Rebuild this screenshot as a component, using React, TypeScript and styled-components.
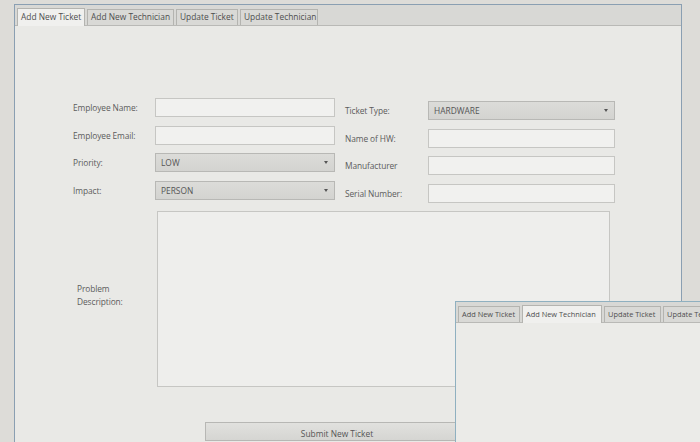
import React from "react";
import styled, { createGlobalStyle } from "styled-components";

const Global = createGlobalStyle`
  html, body { margin: 0; padding: 0; }
  body { background: #dcdcd8; font-family: "Open Sans", "Noto Sans", sans-serif; }
`;

const Page = styled.div`
  position: relative;
  width: 700px;
  height: 442px;
  overflow: hidden;
  background: #dddcd8;
`;

const Window = styled.div`
  position: absolute;
  left: 14px;
  top: 4px;
  width: 668px;
  height: 470px;
  border: 1.5px solid #8a9fb2;
  background: #e9e9e6;
  box-sizing: border-box;
  display: flex;
  flex-direction: column;
`;

const TabBar = styled.div<{ $h?: number }>`
  display: flex;
  align-items: flex-end;
  height: ${(p) => p.$h ?? 20}px;
  background: #d8d8d5;
  border-bottom: 1px solid #b9b9b6;
  padding-left: 2px;
  gap: 2px;
  flex-shrink: 0;
`;

const Tab = styled.div<{ $active?: boolean; $w: number; $fs?: number }>`
  width: ${(p) => p.$w}px;
  height: ${(p) => (p.$active ? 18 : 16)}px;
  box-sizing: border-box;
  border: 1px solid #b4b4b0;
  border-bottom: none;
  background: ${(p) => (p.$active ? "#f0f0ee" : "#d9d9d6")};
  color: #4e4e4e;
  font-size: ${(p) => p.$fs ?? 8.4}px;
  line-height: ${(p) => (p.$active ? 16 : 14)}px;
  padding-left: 3px;
  white-space: nowrap;
  overflow: hidden;
  flex-shrink: 0;
  margin-bottom: ${(p) => (p.$active ? -1 : 0)}px;
`;

const Body = styled.div`
  padding: 72px 0 0 58px;
  display: flex;
  flex-direction: column;
`;

const Columns = styled.div`
  display: flex;
`;

const FieldGrid = styled.div<{ $label: number; $field: number; $top: number; $left: number }>`
  display: grid;
  grid-template-columns: ${(p) => p.$label}px ${(p) => p.$field}px;
  grid-auto-rows: 19px;
  row-gap: 8.5px;
  margin-top: ${(p) => p.$top}px;
  margin-left: ${(p) => p.$left}px;
  align-items: center;
`;

const Label = styled.div`
  font-size: 8.4px;
  color: #5c5c5c;
  white-space: nowrap;
  letter-spacing: -0.1px;
`;

const Input = styled.div`
  height: 19px;
  box-sizing: border-box;
  border: 1px solid #c6c6c3;
  background: #f1f1ef;
`;

const Combo = styled.div`
  height: 19px;
  box-sizing: border-box;
  border: 1px solid #b8b8b5;
  background: linear-gradient(#dcdcd9, #d3d3d0);
  display: flex;
  align-items: center;
  justify-content: space-between;
  padding: 0 6px 0 5px;
  font-size: 8.4px;
  color: #555;
`;

const Arrow = styled.span`
  width: 0;
  height: 0;
  border-left: 2.5px solid transparent;
  border-right: 2.5px solid transparent;
  border-top: 3px solid #555;
`;

const DescRow = styled.div`
  display: grid;
  grid-template-columns: 84px 453px;
  margin-top: 8px;
  align-items: center;
`;

const DescLabel = styled(Label)`
  line-height: 13px;
  padding-left: 4px;
  margin-top: -8px;
`;

const TextArea = styled.div`
  height: 176px;
  box-sizing: border-box;
  border: 1px solid #c6c6c3;
  background: #eeeeec;
`;

const SubmitButton = styled.div`
  margin-top: 35px;
  margin-left: 132px;
  width: 264px;
  height: 19px;
  box-sizing: border-box;
  border: 1px solid #b7b7b4;
  background: linear-gradient(#e1e1de, #d5d5d2);
  font-size: 8.4px;
  color: #555;
  text-align: center;
  line-height: 22px;
`;

const SubWindow = styled.div`
  position: absolute;
  left: 455px;
  top: 301px;
  width: 260px;
  height: 150px;
  box-sizing: border-box;
  border: 1.5px solid #8fb0c0;
  border-right: none;
  background: #e9e9e6;
  display: flex;
  flex-direction: column;
`;

const SubBody = styled.div`
  flex: 1;
  background: #ebebe8;
`;

const mainTabs: [string, number][] = [
  ["Add New Ticket", 68],
  ["Add New Technician", 87],
  ["Update Ticket", 62],
  ["Update Technician", 78],
];

const subTabs: [string, number][] = [
  ["Add New Ticket", 62],
  ["Add New Technician", 80],
  ["Update Ticket", 57],
  ["Update Technician", 74],
];

export default function App() {
  return (
    <Page>
      <Global />
      <Window>
        <TabBar>
          {mainTabs.map(([t, w], i) => (
            <Tab key={t} $w={w} $active={i === 0}>
              {t}
            </Tab>
          ))}
        </TabBar>
        <Body>
          <Columns>
            <FieldGrid $label={82} $field={180} $top={0} $left={0}>
              <Label>Employee Name:</Label>
              <Input />
              <Label>Employee Email:</Label>
              <Input />
              <Label>Priority:</Label>
              <Combo>
                LOW
                <Arrow />
              </Combo>
              <Label>Impact:</Label>
              <Combo>
                PERSON
                <Arrow />
              </Combo>
            </FieldGrid>
            <FieldGrid $label={83} $field={187} $top={3} $left={10}>
              <Label>Ticket Type:</Label>
              <Combo>
                HARDWARE
                <Arrow />
              </Combo>
              <Label>Name of HW:</Label>
              <Input />
              <Label>Manufacturer</Label>
              <Input />
              <Label>Serial Number:</Label>
              <Input />
            </FieldGrid>
          </Columns>
          <DescRow>
            <DescLabel>
              Problem
              <br />
              Description:
            </DescLabel>
            <TextArea />
          </DescRow>
          <SubmitButton>Submit New Ticket</SubmitButton>
        </Body>
      </Window>
      <SubWindow>
        <TabBar $h={20}>
          {subTabs.map(([t, w], i) => (
            <Tab key={t} $w={w} $active={i === 1} $fs={7.4}>
              {t}
            </Tab>
          ))}
        </TabBar>
        <SubBody />
      </SubWindow>
    </Page>
  );
}
